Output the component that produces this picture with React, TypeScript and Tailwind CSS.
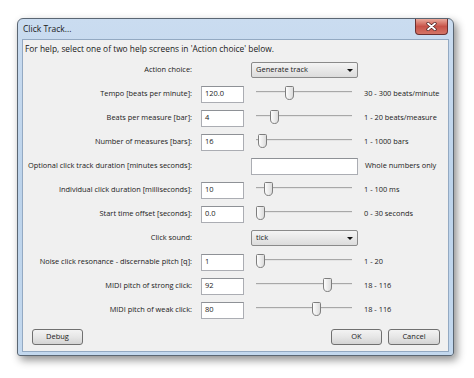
import React from "react";

const font = "font-['Open_Sans','Noto_Sans',sans-serif]";

type Row =
  | { kind: "slider"; label: string; value: string; thumb: number; range: string }
  | { kind: "select"; label: string; value: string }
  | { kind: "wide"; label: string; note: string };

const rows: Row[] = [
  { kind: "select", label: "Action choice:", value: "Generate track" },
  { kind: "slider", label: "Tempo [beats per minute]:", value: "120.0", thumb: 38, range: "30 - 300 beats/minute" },
  { kind: "slider", label: "Beats per measure [bar]:", value: "4", thumb: 23, range: "1 - 20 beats/measure" },
  { kind: "slider", label: "Number of measures [bars]:", value: "16", thumb: 11, range: "1 - 1000 bars" },
  { kind: "wide", label: "Optional click track duration [minutes seconds]:", note: "Whole numbers only" },
  { kind: "slider", label: "Individual click duration [milliseconds]:", value: "10", thumb: 17, range: "1 - 100 ms" },
  { kind: "slider", label: "Start time offset [seconds]:", value: "0.0", thumb: 9, range: "0 - 30 seconds" },
  { kind: "select", label: "Click sound:", value: "tick" },
  { kind: "slider", label: "Noise click resonance - discernable pitch [q]:", value: "1", thumb: 9, range: "1 - 20" },
  { kind: "slider", label: "MIDI pitch of strong click:", value: "92", thumb: 76, range: "18 - 116" },
  { kind: "slider", label: "MIDI pitch of weak click:", value: "80", thumb: 65, range: "18 - 116" },
];

const Thumb = () => (
  <svg width="9" height="14" viewBox="0 0 9 14">
    <defs>
      <linearGradient id="thumbGrad" x1="0" y1="0" x2="1" y2="0">
        <stop offset="0" stopColor="#ffffff" />
        <stop offset="1" stopColor="#dadada" />
      </linearGradient>
    </defs>
    <path
      d="M1.5 0.5H7.5Q8.5 0.5 8.5 1.5V9Q8.5 13.5 4.5 13.5Q0.5 13.5 0.5 9V1.5Q0.5 0.5 1.5 0.5Z"
      fill="url(#thumbGrad)"
      stroke="#7d7d7d"
    />
  </svg>
);

const Slider = ({ thumb }: { thumb: number }) => (
  <div className="relative w-[107px] h-[16px]">
    <div className="absolute left-[5px] right-[6px] top-[5px] h-[2px] border-t border-[#a8a8a8] bg-[#e4e4e4]" />
    <div className="absolute top-0" style={{ left: thumb - 4.5 }}>
      <Thumb />
    </div>
  </div>
);

const TextBox = ({ value, w = "w-[43px]" }: { value: string; w?: string }) => (
  <div className={`${w} h-[17px] bg-white border border-[#abadb3] border-t-[#8e9196] flex items-center pl-[3px] text-[7.5px] text-[#1a1a1a]`}>
    {value}
  </div>
);

const Select = ({ value }: { value: string }) => (
  <div className="w-[107px] h-[16px] rounded-[2px] border border-[#8a8a8a] bg-gradient-to-b from-[#f4f4f4] to-[#dcdcdc] flex items-center justify-between pl-[4px] pr-[4px] text-[7.5px] text-[#1a1a1a]">
    <span>{value}</span>
    <span className="w-0 h-0 border-l-[3px] border-r-[3px] border-t-[3px] border-l-transparent border-r-transparent border-t-[#111]" />
  </div>
);

const Button = ({ children, w = "w-[51px]" }: { children: React.ReactNode; w?: string }) => (
  <div className={`${w} h-[16px] rounded-[3px] border border-[#707070] bg-gradient-to-b from-[#f3f3f3] via-[#e6e6e6] to-[#d4d4d4] flex items-center justify-center text-[7.5px] text-[#1a1a1a]`}>
    {children}
  </div>
);

export default function App() {
  return (
    <div className={`w-[474px] h-[378px] bg-white pt-[18px] pl-[17px] ${font}`}>
      <div className="w-[437px] h-[338px] rounded-t-[6px] rounded-b-[3px] border border-[#5a6673] bg-gradient-to-b from-[#cadcf0] via-[#bcd3eb] to-[#c3d8ee] shadow-[3px_4px_8px_rgba(0,0,0,0.45)] flex flex-col">
        {/* title bar */}
        <div className="h-[20px] flex justify-between">
          <div className="pl-[5px] pt-[4px] text-[8.5px] text-[#1a1a1a]">Click Track...</div>
          <div className="mr-[5px] w-[33px] h-[16px] rounded-b-[4px] border border-t-0 border-[#6b3030] bg-gradient-to-b from-[#e9a99c] via-[#c75248] to-[#d47466] flex items-center justify-center">
            <svg width="11" height="9" viewBox="0 0 11 9">
              <path d="M2 1.5L9 7.5M9 1.5L2 7.5" stroke="#4a2020" strokeWidth="3.2" strokeLinecap="round" />
              <path d="M2 1.5L9 7.5M9 1.5L2 7.5" stroke="#ffffff" strokeWidth="1.8" strokeLinecap="round" />
            </svg>
          </div>
        </div>

        {/* client area */}
        <div className="mx-[4px] h-[313px] border border-[#93a9c2] bg-[#f0f0f0] pl-[2px] flex flex-col">
          <div className="h-[18px] flex items-center text-[8.4px] text-[#1a1a1a] whitespace-nowrap">
            For help, select one of two help screens in 'Action choice' below.
          </div>
          {rows.map((r, i) => (
            <div key={i} className="h-[24px] flex items-center text-[7.4px] text-[#1a1a1a]">
              <div className="w-[167px] text-right whitespace-nowrap">{r.label}</div>
              {r.kind === "slider" && (
                <>
                  <div className="ml-[9px]">
                    <TextBox value={r.value} />
                  </div>
                  <div className="ml-[7px]">
                    <Slider thumb={r.thumb} />
                  </div>
                  <div className="ml-[6px] whitespace-nowrap">{r.range}</div>
                </>
              )}
              {r.kind === "select" && (
                <div className="ml-[59px]">
                  <Select value={r.value} />
                </div>
              )}
              {r.kind === "wide" && (
                <>
                  <div className="ml-[59px]">
                    <TextBox value="" w="w-[107px]" />
                  </div>
                  <div className="ml-[7px] whitespace-nowrap">{r.note}</div>
                </>
              )}
            </div>
          ))}
          <div className="mt-[7px] flex items-center justify-between pl-[7px] pr-[8px]">
            <Button>Debug</Button>
            <div className="flex gap-[6px]">
              <Button>OK</Button>
              <Button w="w-[52px]">Cancel</Button>
            </div>
          </div>
        </div>
      </div>
    </div>
  );
}
